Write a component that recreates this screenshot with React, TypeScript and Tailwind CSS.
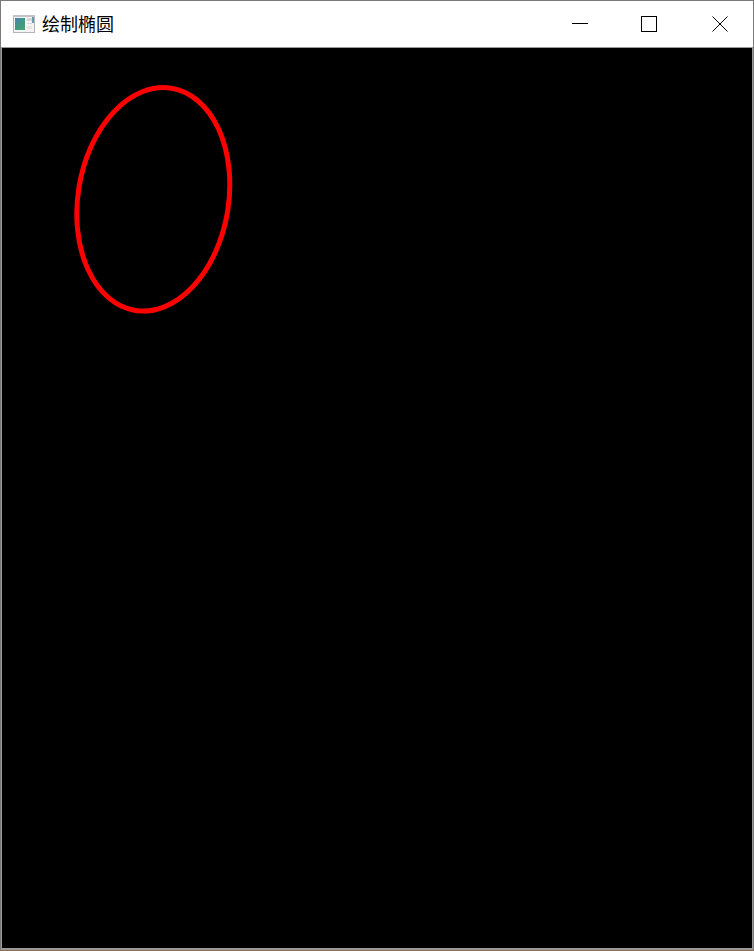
// Window with an ellipse drawn on a black canvas
function TitleIcon() {
  return (
    <svg width="22" height="18" viewBox="0 0 22 18" className="shrink-0">
      <defs>
        <linearGradient id="iconFill" x1="0" y1="0" x2="1" y2="1">
          <stop offset="0" stopColor="#4f7fb0" />
          <stop offset="0.55" stopColor="#3f9a82" />
          <stop offset="1" stopColor="#4aa56e" />
        </linearGradient>
      </defs>
      <rect x="0.5" y="0.5" width="21" height="17" fill="#f4f4f4" stroke="#b4b4b8" />
      <rect x="0" y="0" width="22" height="2" fill="#c2c2c8" />
      <rect x="2" y="3" width="10" height="12" fill="url(#iconFill)" />
      <rect x="14" y="3" width="5" height="3" fill="#d4d8d8" />
      <rect x="14" y="8" width="5" height="1" fill="#d8d8d8" />
      <rect x="14" y="11" width="5" height="3" fill="#e4e4e4" />
      <rect x="19" y="2" width="2" height="6" fill="#6f9aa8" />
    </svg>
  );
}

export default function App() {
  return (
    <div className="relative flex h-[951px] w-[754px] flex-col overflow-hidden border-x border-t border-b border-x-[#7a7a7a] border-t-[#7a7a7a] border-b-[#8f6a4e] bg-white">
      <div className="flex h-[46px] shrink-0 items-center bg-white pl-[12px]">
        <TitleIcon />
        <span className="ml-[7px] -translate-y-px text-[18px] leading-none text-black" style={{ fontFamily: '"Noto Sans CJK SC", "Liberation Sans", sans-serif' }}>
          绘制椭圆
        </span>
        <div className="ml-auto flex h-full items-center pr-[25px]">
          <button type="button" className="flex items-center">
            <svg width="16" height="16" viewBox="0 0 16 16"><path d="M0 7.5H16" stroke="#000" fill="none" /></svg>
          </button>
          <button type="button" className="ml-[53px] flex items-center">
            <svg width="16" height="16" viewBox="0 0 16 16"><rect x="0.5" y="0.5" width="15" height="15" stroke="#000" fill="none" /></svg>
          </button>
          <button type="button" className="ml-[55px] flex items-center">
            <svg width="16" height="16" viewBox="0 0 16 16"><path d="M0.5 0.5L15.5 15.5M15.5 0.5L0.5 15.5" stroke="#000" fill="none" /></svg>
          </button>
        </div>
      </div>
      <div className="min-h-0 flex-1 border-x border-t border-b-2 border-[#9a9a9a] bg-black">
        <svg width="750" height="900" viewBox="0 0 750 900" className="block">
          <ellipse cx="151.3" cy="151.3" rx="75.3" ry="112.6" transform="rotate(9.3 151.3 151.3)" fill="none" stroke="#ff0000" strokeWidth="5" />
        </svg>
      </div>
      <div className="absolute bottom-0 left-[-1px] top-[720px] w-px bg-[#8f6a4e]" />
    </div>
  );
}
